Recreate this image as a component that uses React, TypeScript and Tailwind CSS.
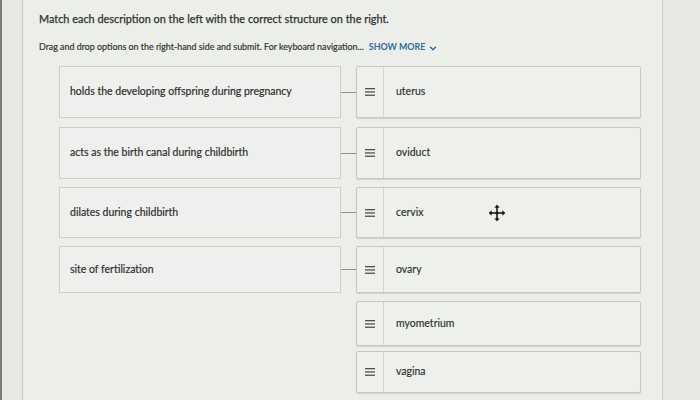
import React from 'react';

// Left column prompts, right column draggable answers
const prompts = [
  { text: 'holds the developing offspring during pregnancy', h: 'h-[52px]' },
  { text: 'acts as the birth canal during childbirth', h: 'h-[52px]' },
  { text: 'dilates during childbirth', h: 'h-[51px]' },
  { text: 'site of fertilization', h: 'h-[47px]' },
];

const answers = [
  { text: 'uterus', h: 'h-[52px]' },
  { text: 'oviduct', h: 'h-[52px]' },
  { text: 'cervix', h: 'h-[51px]' },
  { text: 'ovary', h: 'h-[47px]' },
  { text: 'myometrium', h: 'h-[45px]' },
  { text: 'vagina', h: 'h-[42px]' },
];

const gaps = ['mb-[9px]', 'mb-[8px]', 'mb-[8px]', 'mb-[8px]', 'mb-[5px]', 'mb-0'];

const Handle = () => (
  <div className="w-[27px] h-full border-r border-[#d3d5d1] flex items-center justify-center">
    <svg width="10" height="8" viewBox="0 0 10 8">
      <rect x="0" y="0" width="10" height="1.3" fill="#505250" />
      <rect x="0" y="3.3" width="10" height="1.3" fill="#505250" />
      <rect x="0" y="6.6" width="10" height="1.3" fill="#505250" />
    </svg>
  </div>
);

const MoveCursor = () => (
  <svg width="20" height="20" viewBox="0 0 20 20" className="absolute left-[487px] top-[203px]">
    <path d="M10 1 L13.5 5 L11.3 5 L11.3 8.7 L15 8.7 L15 6.5 L19 10 L15 13.5 L15 11.3 L11.3 11.3 L11.3 15 L13.5 15 L10 19 L6.5 15 L8.7 15 L8.7 11.3 L5 11.3 L5 13.5 L1 10 L5 6.5 L5 8.7 L8.7 8.7 L8.7 5 L6.5 5 Z" fill="#1b1b1b" stroke="#f4f4f4" strokeWidth="1" />
  </svg>
);

export default function App() {
  return (
    <div
      className="relative w-[700px] h-[400px] overflow-hidden bg-[#e8e9e5]"
      style={{ fontFamily: 'Lato, "Open Sans", sans-serif' }}
    >
      <div className="absolute left-0 top-0 w-[2px] h-full bg-[#7a7c7a]" />
      <div className="ml-[22px] w-[641px] h-[400px] border-l border-r border-[#c9cbc7] bg-[#eceeea]">
        <div className="pl-[16px] pt-[11px] text-[10.9px] text-[#2f3130] leading-[16px] [-webkit-text-stroke:0.25px_#2f3130]">
          Match each description on the left with the correct structure on the right.
        </div>
        <div className="pl-[16px] pt-[13px] text-[8.9px] text-[#353736] leading-[14px] flex items-center [-webkit-text-stroke:0.2px_#353736]">
          <span>Drag and drop options on the right-hand side and submit. For keyboard navigation...</span>
          <span className="ml-[5px] font-bold text-[#2c6aa8] [-webkit-text-stroke:0px]">SHOW MORE</span>
          <svg width="8" height="5" viewBox="0 0 9 6" className="ml-[4px] mt-[2px]">
            <path d="M1 1 L4.5 4.5 L8 1" fill="none" stroke="#2c6aa8" strokeWidth="1.6" />
          </svg>
        </div>

        <div className="flex mt-[12px] pl-[36px]">
          <div className="flex flex-col w-[282px]">
            {prompts.map((p, i) => (
              <div
                key={p.text}
                className={`${p.h} ${gaps[i]} border border-[#cdcfcb] bg-[#eff0ed] flex items-center pl-[10px] text-[10.5px] text-[#2f3130] [-webkit-text-stroke:0.2px_#2f3130]`}
              >
                {p.text}
              </div>
            ))}
          </div>
          <div className="flex flex-col w-[15px]">
            {prompts.map((p, i) => (
              <div key={p.text} className={`${p.h} ${gaps[i]} flex items-center`}>
                <div className="w-full h-px bg-[#8e908d]" />
              </div>
            ))}
          </div>
          <div className="flex flex-col w-[285px]">
            {answers.map((a, i) => (
              <div
                key={a.text}
                className={`${a.h} ${gaps[i]} border border-[#c6c8c4] rounded-[2px] bg-[#eef0ec] shadow-[0_1px_1px_rgba(0,0,0,0.12)] flex items-center text-[10.5px] text-[#2f3130] [-webkit-text-stroke:0.15px_#2f3130]`}
              >
                <Handle />
                <span className="pl-[12px]">{a.text}</span>
              </div>
            ))}
          </div>
        </div>
      </div>
      <MoveCursor />
    </div>
  );
}
